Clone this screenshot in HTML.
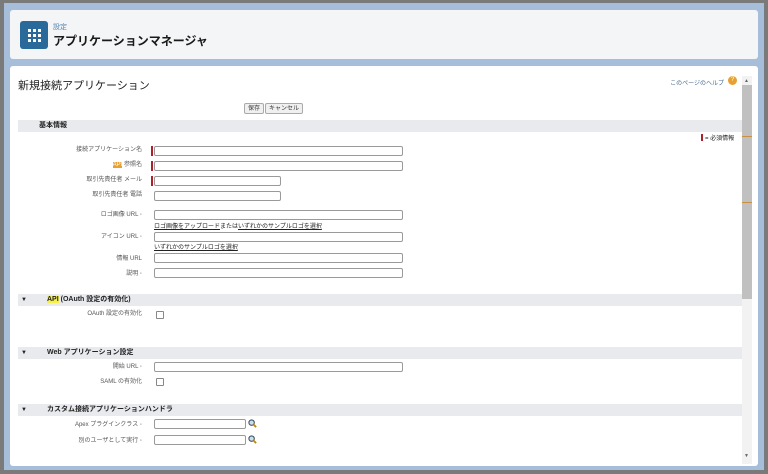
<!DOCTYPE html>
<html><head><meta charset="utf-8"><style>
*{margin:0;padding:0;box-sizing:border-box}
body{width:768px;height:474px;overflow:hidden;background:#7a7a7a;font-family:"Liberation Sans","Noto Sans CJK JP",sans-serif;position:relative}
.bg{position:absolute;left:4px;top:3px;width:760px;height:467px;background:#a7bedb}
.hdr{position:absolute;left:10px;top:10px;width:748px;height:49px;background:#f4f5f6;border-radius:3px}
.icon{position:absolute;left:10px;top:11px;width:28px;height:28px;background:#2a6a9a;border-radius:3px}
.icon i{position:absolute;width:3px;height:3px;background:#fff}
.main{position:absolute;left:10px;top:66px;width:748px;height:400px;background:#fff;border-radius:3px;overflow:hidden}
.t{position:absolute;white-space:nowrap}
.lbl{position:absolute;font-size:6px;color:#555;text-align:right;width:132px;white-space:nowrap}
.inp{position:absolute;height:10px;border:1px solid #9a9a9a;border-radius:2px;background:#fff}
.req{position:absolute;width:2px;height:10px;background:#b0202a}
.sec{position:absolute;left:8px;width:724px;height:12px;background:#e8eaee;font-size:7px;color:#222;font-weight:bold;line-height:12px}
.lnk{position:absolute;font-size:6px;color:#222;text-decoration:underline;white-space:nowrap}
.cb{position:absolute;width:8px;height:8px;border:1px solid #888;border-radius:1px}
.mag{position:absolute;width:9px;height:9px}
</style></head><body>
<div class="bg"></div>
<div class="hdr">
 <div class="icon">
  <i style="left:8px;top:8px"></i><i style="left:13px;top:8px"></i><i style="left:18px;top:8px"></i>
  <i style="left:8px;top:13px"></i><i style="left:13px;top:13px"></i><i style="left:18px;top:13px"></i>
  <i style="left:8px;top:18px"></i><i style="left:13px;top:18px"></i><i style="left:18px;top:18px"></i>
 </div>
 <div class="t" style="left:43px;top:12px;font-size:7px;color:#4a7fb0">設定</div>
 <div class="t" style="left:43px;top:22px;font-size:12px;font-weight:bold;color:#1a1a1a">アプリケーションマネージャ</div>
</div>
<div class="main">
 <div class="t" style="left:8px;top:11px;font-size:11px;color:#222">新規接続アプリケーション</div>
 <div class="t" style="left:640px;top:12px;width:74px;text-align:right;font-size:6px;color:#4a6a8a">このページのヘルプ</div>
 <div class="t" style="left:718px;top:10px;width:9px;height:9px;border-radius:50%;background:#e8a030;color:#fff;font-size:6px;text-align:center;line-height:9px">?</div>
 <div class="t" style="left:234px;top:37px;height:11px;padding:0 3px;border:1px solid #aaa;border-radius:2px;background:#f0f0f0;font-size:6px;line-height:10px;color:#333">保存</div>
 <div class="t" style="left:255px;top:37px;height:11px;padding:0 3px;border:1px solid #aaa;border-radius:2px;background:#f0f0f0;font-size:6px;line-height:10px;color:#333">キャンセル</div>
 <div class="sec" style="top:54px;padding-left:21px">基本情報</div>
 <div class="t" style="left:691px;top:68px;width:2px;height:7px;background:#b0202a"></div>
 <div class="t" style="left:695px;top:67px;font-size:6px;color:#222">= 必須情報</div>

 <div class="lbl" style="left:0;top:78px">接続アプリケーション名</div>
 <div class="req" style="left:141px;top:80px"></div><div class="inp" style="left:144px;top:80px;width:249px"></div>
 <div class="lbl" style="left:0;top:93px"><span style="background:#e8a030;color:#fff">API</span> 参照名</div>
 <div class="req" style="left:141px;top:95px"></div><div class="inp" style="left:144px;top:95px;width:249px"></div>
 <div class="lbl" style="left:0;top:108px">取引先責任者 メール</div>
 <div class="req" style="left:141px;top:110px"></div><div class="inp" style="left:144px;top:110px;width:127px"></div>
 <div class="lbl" style="left:0;top:123px">取引先責任者 電話</div>
 <div class="inp" style="left:144px;top:125px;width:127px"></div>
 <div class="lbl" style="left:0;top:143px">ロゴ画像 URL ◦</div>
 <div class="inp" style="left:144px;top:144px;width:249px"></div>
 <div class="lnk" style="left:144px;top:155px">ロゴ画像をアップロード</div><div class="t" style="left:210px;top:155px;font-size:6px;color:#222">または</div><div class="lnk" style="left:228px;top:155px">いずれかのサンプルロゴを選択</div>
 <div class="lbl" style="left:0;top:165px">アイコン URL ◦</div>
 <div class="inp" style="left:144px;top:166px;width:249px"></div>
 <div class="lnk" style="left:144px;top:176px">いずれかのサンプルロゴを選択</div>
 <div class="lbl" style="left:0;top:187px">情報 URL</div>
 <div class="inp" style="left:144px;top:187px;width:249px"></div>
 <div class="lbl" style="left:0;top:202px">説明 ◦</div>
 <div class="inp" style="left:144px;top:202px;width:249px"></div>

 <div class="sec" style="top:228px"><span style="position:absolute;left:3px;font-size:6px">▼</span><span style="position:absolute;left:29px"><span style="background:#f5ef50">API</span> (OAuth 設定の有効化)</span></div>
 <div class="lbl" style="left:0;top:242px">OAuth 設定の有効化</div>
 <div class="cb" style="left:146px;top:245px"></div>

 <div class="sec" style="top:281px"><span style="position:absolute;left:3px;font-size:6px">▼</span><span style="position:absolute;left:29px">Web アプリケーション設定</span></div>
 <div class="lbl" style="left:0;top:295px">開始 URL ◦</div>
 <div class="inp" style="left:144px;top:296px;width:249px"></div>
 <div class="lbl" style="left:0;top:310px">SAML の有効化</div>
 <div class="cb" style="left:146px;top:312px"></div>

 <div class="sec" style="top:338px"><span style="position:absolute;left:3px;font-size:6px">▼</span><span style="position:absolute;left:29px">カスタム接続アプリケーションハンドラ</span></div>
 <div class="lbl" style="left:0;top:353px">Apex プラグインクラス ◦</div>
 <div class="inp" style="left:144px;top:353px;width:92px"></div>
 <svg class="mag" style="left:238px;top:353px" viewBox="0 0 10 10"><circle cx="4" cy="4" r="3" fill="#cde" stroke="#456" stroke-width="1.2"/><path d="M6 6L9 9" stroke="#b80" stroke-width="2"/></svg>
 <div class="lbl" style="left:0;top:369px">別のユーザとして実行 ◦</div>
 <div class="inp" style="left:144px;top:369px;width:92px"></div>
 <svg class="mag" style="left:238px;top:369px" viewBox="0 0 10 10"><circle cx="4" cy="4" r="3" fill="#cde" stroke="#456" stroke-width="1.2"/><path d="M6 6L9 9" stroke="#b80" stroke-width="2"/></svg>

 <div class="t" style="left:732px;top:10px;width:10px;height:388px;background:#f2f2f2"></div>
 <div class="t" style="left:732px;top:19px;width:10px;height:214px;background:#c0c0c0"></div>
 <div class="t" style="left:732px;top:70px;width:10px;height:1px;background:#c89040"></div>
 <div class="t" style="left:732px;top:136px;width:10px;height:1px;background:#c89040"></div>
 <div class="t" style="left:734px;top:12px;font-size:5px;color:#666">▲</div>
 <div class="t" style="left:734px;top:387px;font-size:5px;color:#666">▼</div>
</div>
</body></html>
